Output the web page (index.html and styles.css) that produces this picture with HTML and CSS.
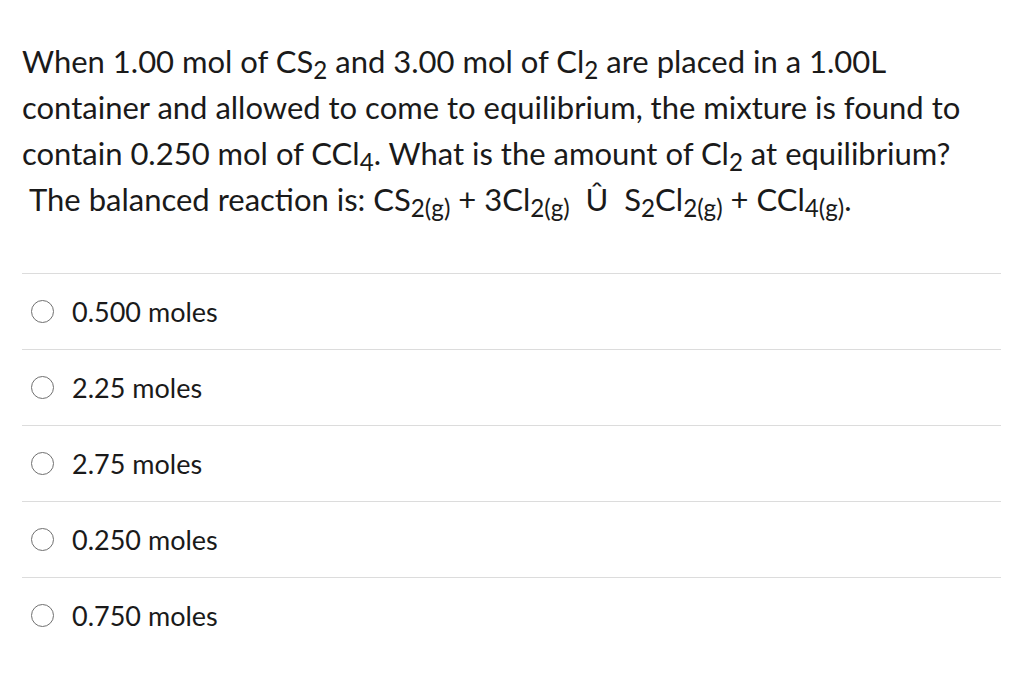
FILE: index.html
```html
<!DOCTYPE html>
<html>
<head>
<meta charset="utf-8">
<link rel="stylesheet" href="styles.css">
</head>
<body>
<div class="quiz">
  <div class="question">
    <p class="qtext">When 1.00 mol of CS<sub>2</sub> and 3.00 mol of Cl<sub>2</sub> are placed in a 1.00L<br>container and allowed to come to equilibrium, the mixture is found to<br>contain 0.250 mol of CCl<sub>4</sub>. What is the amount of Cl<sub>2</sub> at equilibrium?<br>&nbsp;The balanced reaction is: CS<sub>2(g)</sub> + 3Cl<sub>2(g)</sub> &nbsp;Û &nbsp;S<sub>2</sub>Cl<sub>2(g)</sub> + CCl<sub>4(g)</sub>.</p>
  </div>
  <ul class="answers">
    <li class="answer"><span class="radio"></span><span class="label">0.500 moles</span></li>
    <li class="answer"><span class="radio"></span><span class="label">2.25 moles</span></li>
    <li class="answer"><span class="radio"></span><span class="label">2.75 moles</span></li>
    <li class="answer"><span class="radio"></span><span class="label">0.250 moles</span></li>
    <li class="answer"><span class="radio"></span><span class="label">0.750 moles</span></li>
  </ul>
</div>
</body>
</html>
```

FILE: styles.css
```css
html, body {
  margin: 0;
  padding: 0;
  background: #ffffff;
}
body {
  font-family: Lato, "Open Sans", sans-serif;
  color: #1a1a1a;
}
.quiz {
  padding: 38px 0 0 22px;
  width: 979px;
}
.qtext {
  margin: 0;
  font-size: 31px;
  line-height: 46px;
  padding-bottom: 51px;
  white-space: nowrap;
}
.qtext sub {
  font-size: 0.78em;
  vertical-align: -0.24em;
  line-height: 0;
}
.answers {
  list-style: none;
  margin: 0;
  padding: 0;
}
.answer {
  display: flex;
  align-items: center;
  height: 75px;
  border-top: 1px solid #dcdcdc;
  font-size: 27px;
}
.radio {
  width: 23px;
  height: 23px;
  border: 1.5px solid #707070;
  border-radius: 50%;
  margin-left: 9px;
  margin-right: 18px;
  box-sizing: border-box;
  flex: none;
}
```
